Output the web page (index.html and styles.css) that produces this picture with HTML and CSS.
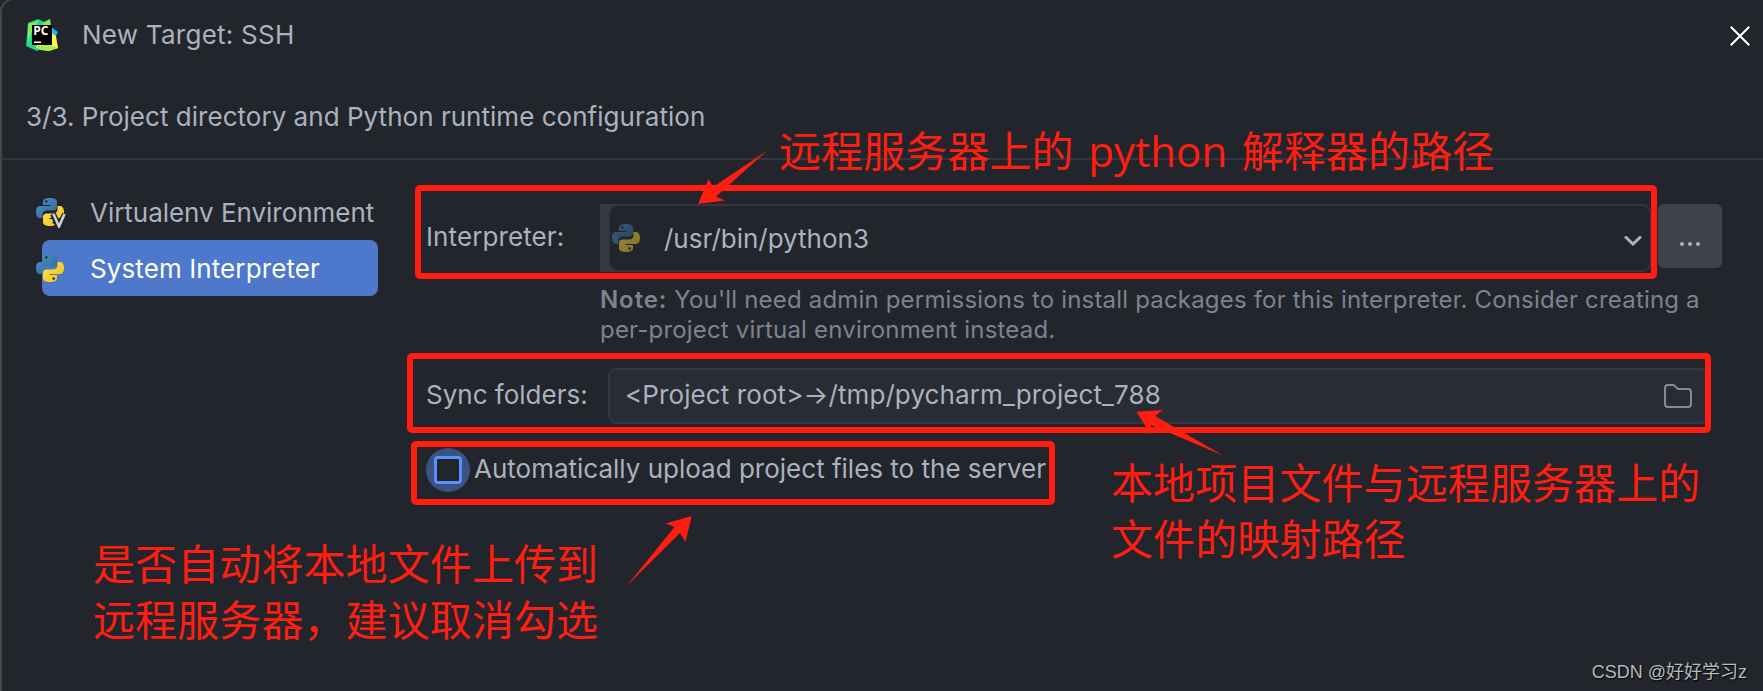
FILE: index.html
```html
<!DOCTYPE html>
<html lang="zh-CN">
<head>
    <meta charset="UTF-8">
    <meta name="viewport" content="width=device-width, initial-scale=1.0">
    <title>New Target: SSH</title>
    <link rel="stylesheet" href="styles.css">
</head>
<body>
    <svg class="defs" width="0" height="0">
        <defs>
            <linearGradient id="blue" x1="0" y1="0" x2="1" y2="1">
                <stop offset="0" stop-color="#4a94c8"/>
                <stop offset="1" stop-color="#33658f"/>
            </linearGradient>
            <linearGradient id="yellow" x1="0" y1="0" x2="1" y2="1">
                <stop offset="0" stop-color="#f5c211"/>
                <stop offset="1" stop-color="#ffe052"/>
            </linearGradient>
        </defs>
        <symbol id="snake" viewBox="0 0 28 28">
            <path d="M14 0c-5 0-7 1.600-7 4v3h7.500v1H4C1.500 8 0 10.500 0 14s1.500 6 4 6h2.500v-3.500C6.500 14 8.500 12.500 11 12.500h6.500c2 0 3.500-1.500 3.500-3.500V4c0-2.400-2-4-7-4z"/>
        </symbol>
        <symbol id="python" viewBox="0 0 28 28">
            <use href="#snake" class="snake-blue"/>
            <use href="#snake" class="snake-yellow" transform="rotate(180 14 14)"/>
            <circle cx="10.300" cy="3.400" r="1.300" class="eye"/>
            <circle cx="17.700" cy="24.600" r="1.300" class="eye"/>
        </symbol>
    </svg>

    <div class="dialog">
        <header class="titlebar">
            <svg class="logo" width="32" height="32" viewBox="0 0 32 32">
                <path fill="#21d789" d="M2 4 12 0l6 3 6-3 1 10-8 18-6 4L0 27z"/>
                <path fill="#8be85a" d="M2 5 13 2 5 14 2 26zM17 4l7-4 1 9-9-1z"/>
                <path fill="#07c3f2" d="m25 8 7 5-4 7-6-4z"/>
                <path fill="#fcf84a" d="m12 24 14-10 4 3 2 12-9 3-13-3z"/>
                <path fill="#a8ed50" d="m10 28 12-3 10 4-9 3-9-1z"/>
                <path d="M6 6h20v20H6z"/>
                <path fill="#fff" d="M8 22.500h7V24H8z"/>
                <text x="7.200" y="16" class="logo-text">PC</text>
            </svg>
            <h1>New Target: SSH</h1>
            <svg class="close" width="20" height="20" viewBox="0 0 20 20">
                <path d="M.7.700l18.600 18.600M19.300.7.700 19.300"/>
            </svg>
        </header>
        <p class="step">3/3. Project directory and Python runtime configuration</p>

        <div class="content">
            <ul class="sidebar">
                <li>
                    <svg class="icon" width="30" height="30" viewBox="0 0 30 30">
                        <use href="#python" width="28" height="28"/>
                        <path class="venv-back" d="m17 16 6 13 6-13"/>
                        <path class="venv" d="m17.500 16 5.500 12.500L28.500 16"/>
                    </svg>
                    <span>Virtualenv Environment</span>
                </li>
                <li class="selected">
                    <svg class="icon" width="30" height="30" viewBox="0 0 30 30">
                        <use href="#python" width="28" height="28"/>
                    </svg>
                    <span>System Interpreter</span>
                </li>
            </ul>

            <div class="form">
                <div class="row interpreter">
                    <label>Interpreter:</label>
                    <div class="combo-wrap">
                        <div class="combo">
                            <svg class="dim" width="28" height="28"><use href="#python"/></svg>
                            <span>/usr/bin/python3</span>
                            <svg class="chevron" width="18" height="10" viewBox="0 0 18 10"><path d="m1 .5 8 7.500 8-7.500"/></svg>
                        </div>
                    </div>
                    <button class="more"><i></i><i></i><i></i></button>
                </div>
                <p class="note"><b>Note:</b> You'll need admin permissions to install packages for this interpreter. Consider creating a<br>per-project virtual environment instead.</p>
                <div class="row sync">
                    <label>Sync folders:</label>
                    <div class="field">
                        <span>&lt;Project root&gt;→/tmp/pycharm_project_788</span>
                        <svg width="28" height="24" viewBox="0 0 28 24">
                            <path d="M1 4a3 3 0 0 1 3-3h5.500L14 5h10a3 3 0 0 1 3 3v12a3 3 0 0 1-3 3H4a3 3 0 0 1-3-3z"/>
                        </svg>
                    </div>
                </div>
                <div class="upload">
                    <span class="focus"><span class="checkbox"></span></span>
                    <label>Automatically upload project files to the server</label>
                </div>
            </div>
        </div>
    </div>

    <!-- anotaciones -->
    <div class="mark mark-interpreter"></div>
    <div class="mark mark-sync"></div>
    <div class="mark mark-upload"></div>
    <svg class="arrows" width="1763" height="691" viewBox="0 0 1763 691">
        <path d="m698 204 10.500-25 4.500 8 55-37-52 46.500 9 4z"/>
        <path d="m1136.500 411.700 26.500-1.700-8 6 68.700 39.700L1151 425l-.300 9.500z"/>
        <path d="m691.700 516-26.100 7.500 8.900 3.500L627 585.500l53-52.500 5.500 9z"/>
    </svg>
    <div class="tip tip-interpreter">远程服务器上的 <span>python</span> 解释器的路径</div>
    <div class="tip tip-sync">本地项目文件与远程服务器上的<br>文件的映射路径</div>
    <div class="tip tip-upload">是否自动将本地文件上传到<br>远程服务器，建议取消勾选</div>
    <div class="watermark">CSDN @好好学习z</div>
</body>
</html>
```

FILE: styles.css
```css
* {
    box-sizing: border-box;
}
body {
    margin: 0;
    height: 691px;
    overflow: hidden;
    position: relative;
    background-color: #22252c;
    font-family: Inter, "Noto Sans CJK SC", sans-serif;
    font-size: 26px;
    line-height: 32px;
    color: #abb2bf;
}
.defs {
    position: absolute;
}
.dialog {
    height: 700px;
    margin-top: -2px;
    border-left: 2px solid #43464b;
    border-top: 2px solid #43464b;
    border-top-left-radius: 14px;
    background-color: #22252c;
}
.titlebar {
    display: flex;
    align-items: center;
    height: 70px;
    padding: 0 13px 0 24px;
}
.titlebar h1 {
    flex: 1;
    margin: 0 0 0 24px;
    font-size: 26px;
    font-weight: 400;
    letter-spacing: 0.25px;
}
.logo-text {
    font: 700 12px "Open Sans", sans-serif;
    fill: #fff;
}
.close {
    margin-top: 2px;
}
.close path {
    fill: none;
    stroke: #fff;
    stroke-width: 2;
}
.step {
    margin: 0;
    height: 90px;
    padding: 31px 0 0 24px;
    border-bottom: 2px solid #33363d;
    letter-spacing: 0.03px;
}
.content {
    display: flex;
}
.sidebar {
    width: 336px;
    margin: 24px 0 0 40px;
    padding: 0;
    list-style: none;
}
.sidebar li {
    display: flex;
    align-items: center;
    height: 56px;
    border-radius: 8px;
    letter-spacing: -0.03px;
    white-space: nowrap;
}
.sidebar span {
    padding-top: 2px;
}
.sidebar .icon {
    flex-shrink: 0;
    margin: 2px 24px 0 -6px;
}
.sidebar .selected {
    background-color: #4d78cc;
    color: #fff;
    letter-spacing: 0.1px;
}
.snake-blue {
    fill: url(#blue);
}
.snake-yellow {
    fill: url(#yellow);
}
.eye {
    fill: #22384c;
}
.venv, .venv-back {
    fill: none;
    stroke: #ced0d6;
    stroke-width: 2.6;
}
.venv-back {
    stroke: #22252c;
    stroke-width: 6;
}
.form {
    margin-left: 48px;
    padding-top: 44px;
    width: 1296px;
}
.row {
    display: flex;
}
.row label {
    flex-shrink: 0;
    width: 174px;
}
.interpreter {
    height: 68px;
}
.interpreter label {
    padding-top: 17px;
    letter-spacing: 0.1px;
}
.combo-wrap {
    width: 1052px;
    padding-left: 8px;
    background: linear-gradient(to right, #363940 20px, #22252c 20px);
}
.combo {
    display: flex;
    align-items: center;
    height: 68px;
    padding: 0 8px 0 2px;
    border: 2px solid #33363e;
    border-radius: 10px;
    background-color: #22252c;
}
.combo span {
    flex: 1;
    padding: 2px 0 0 24px;
}
.dim {
    opacity: 0.5;
}
.chevron path {
    fill: none;
    stroke: #abb2bf;
    stroke-width: 3;
}
.chevron {
    margin-top: 6px;
}
.more {
    display: flex;
    justify-content: center;
    align-items: center;
    gap: 4px;
    width: 64px;
    height: 64px;
    margin-left: 6px;
    padding: 16px 0 0;
    border: none;
    border-radius: 6px;
    background-color: #3f434a;
}
.more i {
    width: 4px;
    height: 4px;
    border-radius: 50%;
    background-color: #abb2bf;
}
.note {
    margin: 13px 0 0 174px;
    font-size: 24px;
    line-height: 30px;
    letter-spacing: 0.18px;
    white-space: nowrap;
    color: #7c8391;
}
.note b {
    font-weight: 600;
    letter-spacing: 0.9px;
}
.sync {
    margin-top: 23px;
}
.sync label {
    width: 182px;
    padding-top: 11px;
}
.field {
    display: flex;
    align-items: center;
    justify-content: space-between;
    width: 1102px;
    height: 56px;
    padding: 0 16px 0 15px;
    border: 2px solid #33363e;
    border-radius: 8px;
    background-color: #292c34;
    letter-spacing: 0.1px;
}
.field span {
    padding-bottom: 2px;
}
.field path {
    fill: none;
    stroke: #868a91;
    stroke-width: 2;
}
.upload {
    display: flex;
    margin-top: 24px;
}
.upload label {
    padding: 5px 0 0 4px;
}
.focus {
    width: 44px;
    height: 44px;
    padding: 8px;
    border-radius: 50%;
    background-color: #3a5182;
}
.checkbox {
    display: block;
    height: 28px;
    border: 3px solid #5890ff;
    border-radius: 4px;
    background-color: #22252c;
}
.mark {
    position: absolute;
    border: 6px solid #ff1e10;
    border-radius: 5px;
}
.mark-interpreter {
    left: 415px;
    top: 185px;
    width: 1242px;
    height: 94px;
}
.mark-sync {
    left: 407px;
    top: 353px;
    width: 1304px;
    height: 80px;
}
.mark-upload {
    left: 411px;
    top: 441px;
    width: 644px;
    height: 64px;
}
.arrows {
    position: absolute;
    left: 0;
    top: 0;
    fill: #ff1e10;
}
.tip {
    position: absolute;
    font-family: "Noto Sans CJK SC", sans-serif;
    font-size: 42px;
    line-height: 56px;
    letter-spacing: 0.1px;
    word-spacing: 5px;
    white-space: nowrap;
    color: #ff1e10;
}
.tip span {
    font-family: "Open Sans", sans-serif;
}
.tip-interpreter {
    left: 779px;
    top: 121px;
}
.tip-sync {
    left: 1111px;
    top: 453px;
}
.tip-upload {
    left: 93px;
    top: 534px;
}
.watermark {
    position: absolute;
    right: 16px;
    bottom: 4px;
    font-family: "Liberation Sans", "Noto Sans CJK SC", sans-serif;
    font-size: 18px;
    line-height: 30px;
    color: #b9babd;
    text-shadow: 1px 1px 1px #000;
}
```
